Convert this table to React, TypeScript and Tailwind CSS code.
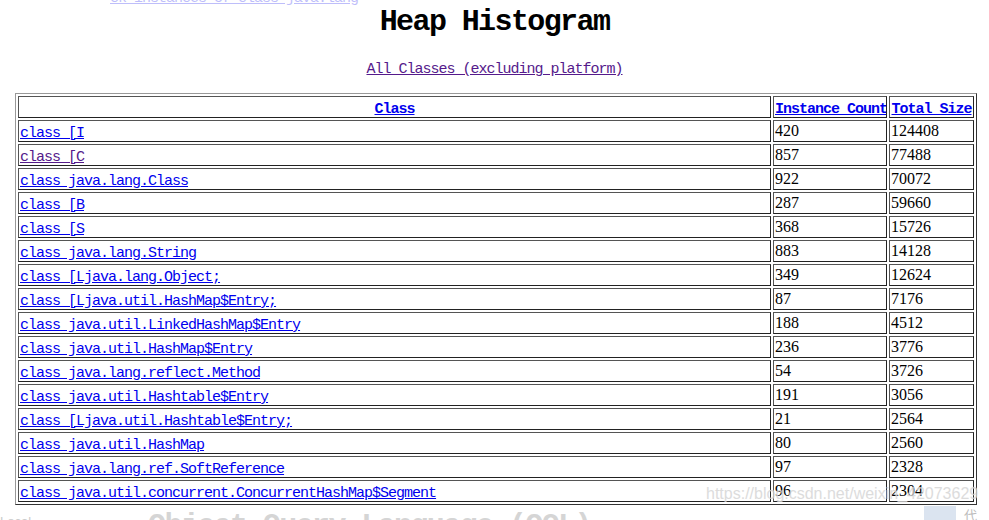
import React from "react"

type Row = { name: string; count: number; size: number; visited?: boolean }

const rows: Row[] = [
  { name: "class [I", count: 420, size: 124408 },
  { name: "class [C", count: 857, size: 77488, visited: true },
  { name: "class java.lang.Class", count: 922, size: 70072 },
  { name: "class [B", count: 287, size: 59660 },
  { name: "class [S", count: 368, size: 15726 },
  { name: "class java.lang.String", count: 883, size: 14128 },
  { name: "class [Ljava.lang.Object;", count: 349, size: 12624 },
  { name: "class [Ljava.util.HashMap$Entry;", count: 87, size: 7176 },
  { name: "class java.util.LinkedHashMap$Entry", count: 188, size: 4512 },
  { name: "class java.util.HashMap$Entry", count: 236, size: 3776 },
  { name: "class java.lang.reflect.Method", count: 54, size: 3726 },
  { name: "class java.util.Hashtable$Entry", count: 191, size: 3056 },
  { name: "class [Ljava.util.Hashtable$Entry;", count: 21, size: 2564 },
  { name: "class java.util.HashMap", count: 80, size: 2560 },
  { name: "class java.lang.ref.SoftReference", count: 97, size: 2328 },
  { name: "class java.util.concurrent.ConcurrentHashMap$Segment", count: 96, size: 2304 },
]

const mono = "font-['Liberation_Mono',monospace] text-[15px] tracking-[-1px]"
const serif = "font-['Liberation_Serif',serif] text-[16px]"
const cell =
  "h-[22px] px-px border border-t-[#555] border-l-[#555] border-r-[#222] border-b-[#222] leading-[20px] whitespace-nowrap overflow-hidden"

function HeaderCell({ children }: { children: React.ReactNode }) {
  return (
    <div className={`${cell} text-center`}>
      <a className={`${mono} leading-[20px] font-bold text-[#0000ee] underline`}>{children}</a>
    </div>
  )
}

export default function App() {
  return (
    <div className="relative w-[989px] h-[520px] overflow-hidden bg-white flex flex-col items-center">
      {/* cut-off line above */}
      <div className={`absolute left-[110px] top-[-12px] ${mono} text-[#0000ee] opacity-25 underline`}>
        ck instances of class java.lang
      </div>

      <h1 className="pt-[4px] h-[40px] font-['Liberation_Mono',monospace] font-bold text-[30px] leading-[36px] tracking-[-1.6px] text-black">
        Heap Histogram
      </h1>

      <div className="mt-[17px] h-[20px] leading-[20px]">
        <a className={`${mono} leading-[20px] text-[#551a8b] underline`}>All Classes (excluding platform)</a>
      </div>

      <div className="mt-[16px] self-start ml-[15px] p-[2px] border border-t-[#999] border-l-[#999] border-r-[#333] border-b-[#333] grid grid-cols-[753px_114px_85px] gap-[2px]">
        <HeaderCell>Class</HeaderCell>
        <HeaderCell>Instance Count</HeaderCell>
        <HeaderCell>Total Size</HeaderCell>
        {rows.map(r => (
          <React.Fragment key={r.name}>
            <div className={cell}>
              <a
                className={`${mono} leading-[20px] underline whitespace-pre ${
                  r.visited ? "text-[#551a8b]" : "text-[#0000ee]"
                }`}
              >
                {r.name}
              </a>
            </div>
            <div className={`${cell} ${serif} leading-[20px] text-black`}>{r.count}</div>
            <div className={`${cell} ${serif} leading-[20px] text-black`}>{r.size}</div>
          </React.Fragment>
        ))}
      </div>

      {/* next section heading, cut off at the bottom */}
      <div className="absolute left-[148px] top-[508px] font-['Liberation_Mono',monospace] font-bold text-[30px] leading-[36px] tracking-[-1.6px] text-[#c4c4c4] opacity-70">
        Object Query Language (OQL)
      </div>
      <div className="absolute left-0 top-[512px] font-['Liberation_Sans',sans-serif] text-[13px] text-[#ccc]">
        Local
      </div>

      {/* watermark */}
      <div className="absolute left-[706px] top-[482px] font-['Liberation_Sans',sans-serif] text-[16px] text-[#d4d4d4] opacity-80 [text-shadow:0_0_1px_#fff]">
        https://blog.csdn.net/weixin_42073629
      </div>

      {/* page widgets on the right */}
      <div className="absolute left-[924px] top-[506px] w-[32px] h-[20px] bg-[#dbe4f0]" />
      <div className="absolute left-[964px] top-[505px] font-['Noto_Sans_CJK_SC',sans-serif] text-[13px] text-[#bbb]">
        代码
      </div>
    </div>
  )
}
